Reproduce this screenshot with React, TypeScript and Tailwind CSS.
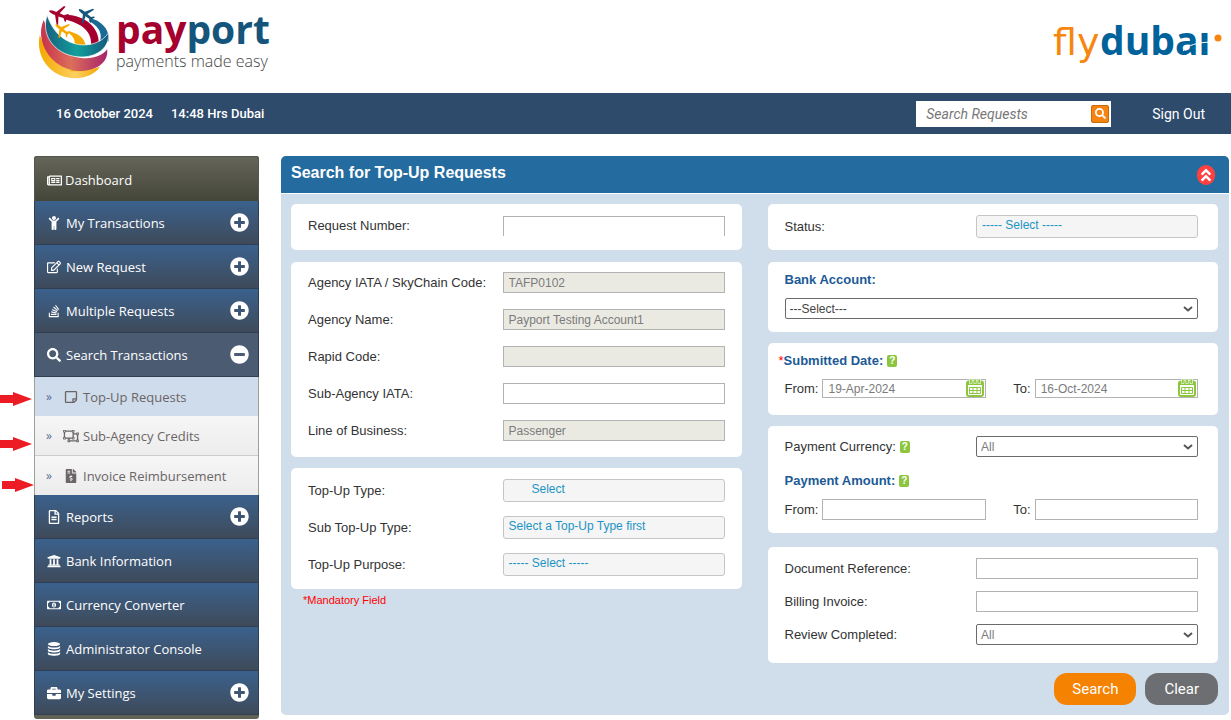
import React, { useId } from "react";
import type { ReactNode } from "react";
import type { IconType } from "react-icons";
import {
  FaAngleDoubleUp,
  FaBriefcase,
  FaChild,
  FaFileInvoiceDollar,
  FaMinusCircle,
  FaPlusCircle,
  FaRegEdit,
  FaRegFileAlt,
  FaRegMoneyBillAlt,
  FaRegNewspaper,
  FaRegObjectUngroup,
  FaRegStickyNote,
  FaSearch,
  FaStackOverflow,
  FaUniversity,
} from "react-icons/fa";

function DatabaseIcon({ className }: { className?: string }) {
  return (
    <svg viewBox="0 0 16 16" className={className} fill="currentColor" aria-hidden="true">
      <ellipse cx="8" cy="2.4" rx="7" ry="2.3" />
      <path d="M1 4.2c1 1.6 4 2.1 7 2.1s6-.5 7-2.1v1.9c0 1.3-3 2.3-7 2.3s-7-1-7-2.3z" />
      <path d="M1 7.8c1 1.6 4 2.1 7 2.1s6-.5 7-2.1v1.9C15 11 12 12 8 12s-7-1-7-2.3z" />
      <path d="M1 11.4c1 1.6 4 2.1 7 2.1s6-.5 7-2.1v1.9c0 1.3-3 2.3-7 2.3s-7-1-7-2.3z" />
    </svg>
  );
}

function Plane({ transform, fill }: { transform: string; fill: string }) {
  return (
    <path
      transform={transform}
      fill={fill}
      d="M0 -28C3 -28 5 -20 5 -14L5 -7L30 8L30 13L5 4L4 20L12 27L12 31L0 27L-12 31L-12 27L-4 20L-5 4L-30 13L-30 8L-5 -7L-5 -14C-5 -20 -3 -28 0 -28Z"
    />
  );
}

function GlobeMark() {
  return (
    <svg viewBox="25 15 215 222" className="h-[74px] w-[72px]" aria-hidden="true">
      <defs>
        <linearGradient id="gold" x1="0" x2="1">
          <stop offset="0" stopColor="#f5a800" />
          <stop offset="0.6" stopColor="#fbd060" />
          <stop offset="1" stopColor="#f5a800" />
        </linearGradient>
        <linearGradient id="rose" x1="0" x2="1">
          <stop offset="0" stopColor="#c8324b" />
          <stop offset="0.45" stopColor="#dc6e5a" />
          <stop offset="1" stopColor="#a8236a" />
        </linearGradient>
        <linearGradient id="teal" x1="0" x2="1">
          <stop offset="0" stopColor="#17607f" />
          <stop offset="0.5" stopColor="#12a09c" />
          <stop offset="1" stopColor="#15587c" />
        </linearGradient>
      </defs>
      <path fill="url(#gold)" d="M30 104C14 180 72 235 135 235C165 234 198 222 210 200C150 222 65 210 30 104Z" />
      <path fill="#f5a800" d="M110 94C145 96 168 118 168 142L134 136C138 120 128 106 110 94ZM132 192L160 190L162 214L122 214Z" />
      <path fill="url(#rose)" d="M42 60C14 118 58 206 145 213C205 213 236 184 232 148C200 192 80 194 42 60Z" />
      <path fill="#a5002e" d="M104 44C165 44 210 82 207 132L184 140C188 96 158 70 102 58Z" />
      <path fill="#1a6a98" d="M180 54C216 62 242 92 236 124L204 138C222 108 212 82 178 64Z" />
      <path fill="url(#teal)" stroke="#fff" strokeWidth="2" d="M52 46C30 108 80 172 158 171C206 169 240 140 236 98C204 152 88 156 52 46Z" />
      <Plane transform="translate(84 43) rotate(-68)" fill="#a5002e" />
      <Plane transform="translate(167 43) rotate(-52) scale(.9)" fill="#15587c" />
      <Plane transform="translate(96 88) rotate(-52) scale(.85)" fill="#f5a800" />
    </svg>
  );
}

function PayportLogo() {
  return (
    <a href="#home" className="flex items-start gap-1.5" aria-label="payport payments made easy">
      <GlobeMark />
      <span className="flex flex-col font-['Open_Sans','Noto_Sans',sans-serif]">
        <span className="text-[39px] leading-[48px] font-bold text-[#15557b]">
          <span className="text-[#a5002e]">pay</span>port
        </span>
        <span className="text-base leading-4 font-light text-[#444]">payments made easy</span>
      </span>
    </a>
  );
}

function FlydubaiLogo() {
  return (
    <a href="#flydubai" aria-label="flydubai" className="block">
      <svg viewBox="0 -12 170 64" className="h-16 w-[170px]">
        <text x="0" y="37" fontSize="38" fill="#f7860f" fontFamily="DejaVu Sans, sans-serif">
          fly
        </text>
        <text x="47" y="37" fontSize="39" fontWeight="700" fill="#00629b" fontFamily="Open Sans, sans-serif">
          dubai
        </text>
        <path d="M146 2h14v13h-14z" fill="#fff" />
        <path d="M130 33C135 27 144 24.500 158 24" fill="none" stroke="#fff" strokeWidth="1" />
        <circle cx="165" cy="20" r="3.500" fill="#f7860f" />
      </svg>
    </a>
  );
}

type SubItem = { label: string; icon: IconType; active?: boolean; arrow: string };

type NavItem = {
  label: string;
  icon: IconType | typeof DatabaseIcon;
  toggle?: "plus" | "minus";
  children?: SubItem[];
};

const navItems: NavItem[] = [
  { label: "My Transactions", icon: FaChild, toggle: "plus" },
  { label: "New Request", icon: FaRegEdit, toggle: "plus" },
  { label: "Multiple Requests", icon: FaStackOverflow, toggle: "plus" },
  {
    label: "Search Transactions",
    icon: FaSearch,
    toggle: "minus",
    children: [
      { label: "Top-Up Requests", icon: FaRegStickyNote, active: true, arrow: "top-[15px] -left-[35px]" },
      { label: "Sub-Agency Credits", icon: FaRegObjectUngroup, arrow: "top-[21px] -left-[35px]" },
      { label: "Invoice Reimbursement", icon: FaFileInvoiceDollar, arrow: "top-[22px] -left-[33px]" },
    ],
  },
  { label: "Reports", icon: FaRegFileAlt, toggle: "plus" },
  { label: "Bank Information", icon: FaUniversity },
  { label: "Currency Converter", icon: FaRegMoneyBillAlt },
  { label: "Administrator Console", icon: DatabaseIcon },
  { label: "My Settings", icon: FaBriefcase, toggle: "plus" },
];

function RedArrow({ className }: { className: string }) {
  return (
    <svg viewBox="0 0 32 14" className={"absolute h-3.5 w-8 " + className} fill="#ed1c24" aria-hidden="true">
      <path d="M0 3h13V0l19 7-19 7v-3H0z" />
    </svg>
  );
}

function Sidebar() {
  return (
    <nav className="w-[225px] shrink-0 rounded-[3px] bg-[#626257] pb-1 font-['Open_Sans','Noto_Sans',sans-serif] text-[13px] text-white">
      <a
        href="#dashboard"
        className="flex h-[45px] items-center gap-[3px] rounded-t-[3px] border-x border-t border-[#55564a] bg-linear-to-b from-[#65655a] to-[#45463a] pt-0.5 pl-3"
      >
        <FaRegNewspaper className="h-[15px] w-[15px]" />
        Dashboard
      </a>
      <ul>
        {navItems.map(({ label, icon: Icon, toggle, children }) => (
          <li key={label}>
            <a
              href={"#" + label}
              className={
                "flex h-11 items-center gap-1 border-x border-b border-[#2f3f52] pr-[9px] pl-[11px] " +
                (children ? "bg-[#4a5b72]" : "bg-linear-to-b from-[#3a618d] to-[#3e4a5a]")
              }
            >
              <span className="flex w-4 justify-center">
                <Icon className="h-3.5 w-3.5" />
              </span>
              <span className="flex-1">{label}</span>
              {toggle === "plus" && <FaPlusCircle className="h-[19px] w-[19px]" />}
              {toggle === "minus" && <FaMinusCircle className="h-[19px] w-[19px]" />}
            </a>
            {children && (
              <ul className="border-x border-[#9fa193] text-[#6b6566]">
                {children.map(({ label: sub, icon: SubIcon, active, arrow }, i) => (
                  <li key={sub} className={"relative " + (i === 1 ? "border-b border-[#ccc]" : "")}>
                    <RedArrow className={arrow} />
                    <a
                      href={"#" + sub}
                      className={
                        "flex h-[39px] items-center pl-[11px] " +
                        (active ? "bg-[#cfdceb]" : "bg-linear-to-b from-[#f6f6f6] to-[#ececec]")
                      }
                    >
                      <span className="w-4 text-[12px] text-[#5a6a96]">»</span>
                      <span className="mr-[3px] flex w-[18px] justify-center">
                        <SubIcon className="h-3.5 w-[18px]" />
                      </span>
                      {sub}
                    </a>
                  </li>
                ))}
              </ul>
            )}
          </li>
        ))}
      </ul>
    </nav>
  );
}

function Card({ className, children }: { className: string; children: ReactNode }) {
  return <div className={"rounded-[5px] bg-white " + className}>{children}</div>;
}

function HelpBadge() {
  return (
    <button
      type="button"
      aria-label="Help"
      className="h-3 w-2.5 rounded-[2px] bg-[#8cc63f] text-[10px] leading-3 font-bold text-white"
    >
      ?
    </button>
  );
}

function Field({ label, help, children }: { label: string; help?: boolean; children: (id: string) => ReactNode }) {
  const id = useId();
  return (
    <div className="grid grid-cols-[1fr_222px] items-center">
      <div className="flex items-center gap-1">
        <label htmlFor={id}>{label}</label>
        {help && <HelpBadge />}
      </div>
      {children(id)}
    </div>
  );
}

const inputBase = "block h-[21px] w-full border border-[#b3b3b3] px-[5px] text-[12px] text-[#7b7b7b] outline-none ";

function TextField({ label, value, disabled }: { label: string; value?: string; disabled?: boolean }) {
  return (
    <Field label={label}>
      {(id) => (
        <input
          id={id}
          type="text"
          defaultValue={value}
          disabled={disabled}
          className={inputBase + (disabled ? "bg-[#eaeae2]" : "bg-white")}
        />
      )}
    </Field>
  );
}

function SoftSelect({ label, value, indent }: { label: string; value: string; indent?: boolean }) {
  return (
    <Field label={label}>
      {(id) => (
        <select
          id={id}
          className={
            "h-[23px] w-full appearance-none rounded-[3px] border border-[#c5c5c5] bg-[#f5f5f5] pb-[3px] text-[12px] text-[#1c94c4] outline-none " +
            (indent ? "pl-7" : "pl-[5px]")
          }
        >
          <option>{value}</option>
        </select>
      )}
    </Field>
  );
}

function PlainSelect({ id, value, dark }: { id: string; value: string; dark?: boolean }) {
  return (
    <div className="relative">
      <select
        id={id}
        className={
          "block h-[21px] w-full appearance-none rounded-[2px] border border-[#6b6b6b] bg-white pl-1 text-[12px] outline-none " +
          (dark ? "text-[#444]" : "text-[#7b7b7b]")
        }
      >
        <option>{value}</option>
      </select>
      <svg
        viewBox="0 0 10 6"
        className="pointer-events-none absolute top-2 right-[5px] h-1.5 w-2.5"
        fill="none"
        stroke="#555"
        strokeWidth="2"
        aria-hidden="true"
      >
        <path d="M1 1l4 3.5L9 1" />
      </svg>
    </div>
  );
}

function CalendarIcon() {
  return (
    <svg viewBox="0 0 18 18" className="h-[18px] w-[18px]" aria-hidden="true">
      <rect x="1" y="2.500" width="16" height="14.500" rx="2" fill="#fff" stroke="#8cc63f" strokeWidth="2" />
      <path fill="#8cc63f" d="M2 3h14v3H2z" />
      <path fill="#8cc63f" stroke="#fff" strokeWidth=".6" d="M3.500 0H6v4.500H3.500zM7.800 0h2.500v4.500H7.800zM12 0h2.500v4.500H12z" />
      <path fill="none" stroke="#8cc63f" strokeWidth="1" d="M3.500 8.500h11v6h-11zM3.500 11.500h11M7 8.500v6M11 8.500v6" />
    </svg>
  );
}

function Range({ name, from, to }: { name: string; from?: string; to?: string }) {
  const parts = [
    { label: "From:", value: from },
    { label: "To:", value: to },
  ];
  return (
    <div className="flex items-center gap-[27px]">
      {parts.map(({ label, value }) => (
        <div key={label} className={"flex items-center gap-1 " + (label === "From:" ? "flex-[201]" : "flex-[184]")}>
          <label htmlFor={name + label}>{label}</label>
          <div className="relative min-w-0 flex-1">
            <input
              id={name + label}
              type="text"
              defaultValue={value}
              className={
                "block w-full border border-[#b3b3b3] bg-white px-[5px] text-[12px] text-[#7b7b7b] outline-none " +
                (value ? "h-[19px]" : "h-[21px]")
              }
            />
            {value && (
              <button type="button" aria-label="Open calendar" className="absolute top-0 right-0.5">
                <CalendarIcon />
              </button>
            )}
          </div>
        </div>
      ))}
    </div>
  );
}

export default function App() {
  return (
    <div className="bg-white font-['Liberation_Sans',Arial,sans-serif] text-[13px] leading-4 text-[#333]">
      <header>
        <div className="flex h-[93px] items-start justify-between pt-[5px] pr-2 pl-[38px]">
          <PayportLogo />
          <div className="pt-px">
            <FlydubaiLogo />
          </div>
        </div>
        <div className="ml-1 flex h-[41px] items-center bg-[#2e4b6b] pr-[26px] pl-[52px] font-['Roboto','Liberation_Sans',sans-serif] font-medium text-white">
          <time>16 October 2024</time>
          <span className="ml-[18px]">14:48 Hrs Dubai</span>
          <form className="mr-[41px] ml-auto flex h-[26px] w-[195px] items-center bg-white pr-0.5">
            <input
              type="search"
              aria-label="Search Requests"
              placeholder="Search Requests"
              className="min-w-0 flex-1 pl-[10px] text-[14px] font-normal italic outline-none placeholder:text-[#777]"
            />
            <button
              type="button"
              aria-label="Search"
              className="flex h-[18px] w-[18px] items-center justify-center rounded-[2px] border border-[#c96a08] bg-[#f58410]"
            >
              <FaSearch className="h-[11px] w-[11px] text-white" />
            </button>
          </form>
          <a href="#signout" className="text-[14px] font-normal">
            Sign Out
          </a>
        </div>
      </header>

      <div className="flex items-start gap-[22px] pt-[22px] pr-0.5 pl-[34px]">
        <Sidebar />

        <main className="min-w-0 flex-1 rounded-[5px] bg-[#d0ddea]">
          <div className="flex h-[38px] items-center justify-between rounded-t-[5px] border-b border-white bg-[#246c9f] pr-3.5 pl-2.5">
            <h1 className="pb-1 text-base font-bold text-white">Search for Top-Up Requests</h1>
            <button
              type="button"
              aria-label="Collapse"
              className="flex h-5 w-[18px] items-center justify-center rounded-full bg-[#ff4040] text-white"
            >
              <FaAngleDoubleUp className="h-4 w-4" />
            </button>
          </div>

          <form className="pr-[11px] pb-2.5 pl-2.5">
            <div className="grid grid-cols-2 items-start gap-[26px] pt-2.5">
              <div className="flex flex-col gap-[11px]">
                <Card className="mb-px h-[46px] px-[17px] pt-3">
                  <Field label="Request Number:">
                    {(id) => (
                      <input
                        id={id}
                        type="text"
                        className="h-5 w-full border border-b-0 border-[#b3b3b3] bg-white px-[5px] text-[12px] outline-none"
                      />
                    )}
                  </Field>
                </Card>
                <Card className="flex flex-col gap-4 px-[17px] pt-2.5 pb-4">
                  <TextField label="Agency IATA / SkyChain Code:" value="TAFP0102" disabled />
                  <TextField label="Agency Name:" value="Payport Testing Account1" disabled />
                  <TextField label="Rapid Code:" disabled />
                  <TextField label="Sub-Agency IATA:" />
                  <TextField label="Line of Business:" value="Passenger" disabled />
                </Card>
                <Card className="flex flex-col gap-3.5 px-[17px] pt-[11px] pb-[13px]">
                  <SoftSelect label="Top-Up Type:" value="Select" indent />
                  <SoftSelect label="Sub Top-Up Type:" value="Select a Top-Up Type first" />
                  <SoftSelect label="Top-Up Purpose:" value="----- Select -----" />
                </Card>
                <p className="-mt-2 pl-3 text-[11px] text-[#ff0000]">*Mandatory Field</p>
              </div>

              <div className="flex flex-col gap-[11px]">
                <Card className="mb-px h-[46px] pt-[11px] pr-5 pl-[17px]">
                  <SoftSelect label="Status:" value="----- Select -----" />
                </Card>
                <Card className="flex flex-col gap-2.5 pt-2.5 pr-5 pb-[13px] pl-[17px]">
                  <label htmlFor="bank-account" className="font-bold text-[#1c5a96]">
                    Bank Account:
                  </label>
                  <PlainSelect id="bank-account" value="---Select---" dark />
                </Card>
                <Card className="flex flex-col gap-2.5 pt-2.5 pr-5 pb-[17px] pl-[17px]">
                  <div className="-ml-1.5 flex items-center gap-1 font-bold text-[#1c5a96]">
                    <span>
                      <span className="font-normal text-[#ff0000]">*</span>Submitted Date:
                    </span>
                    <HelpBadge />
                  </div>
                  <Range name="date" from="19-Apr-2024" to="16-Oct-2024" />
                </Card>
                <Card className="flex flex-col gap-4 pt-2.5 pr-5 pb-[13px] pl-[17px]">
                  <Field label="Payment Currency:" help>
                    {(id) => <PlainSelect id={id} value="All" />}
                  </Field>
                  <div className="flex flex-col gap-2.5">
                    <div className="flex items-center gap-1 font-bold text-[#1c5a96]">
                      Payment Amount:
                      <HelpBadge />
                    </div>
                    <Range name="amount" />
                  </div>
                </Card>
                <Card className="mt-[3px] flex flex-col gap-3 pt-[11px] pr-5 pb-[18px] pl-[17px]">
                  <TextField label="Document Reference:" />
                  <TextField label="Billing Invoice:" />
                  <Field label="Review Completed:">{(id) => <PlainSelect id={id} value="All" />}</Field>
                </Card>
              </div>
            </div>
            <div className="mt-2.5 flex justify-end gap-[9px] font-['Roboto','Liberation_Sans',sans-serif] text-[15px] text-white">
              <button type="button" className="h-8 rounded-[13px] bg-[#f58200] px-[18px]">
                Search
              </button>
              <button type="reset" className="h-8 rounded-[13px] bg-[#6d6e71] px-[19px]">
                Clear
              </button>
            </div>
          </form>
        </main>
      </div>
    </div>
  );
}
